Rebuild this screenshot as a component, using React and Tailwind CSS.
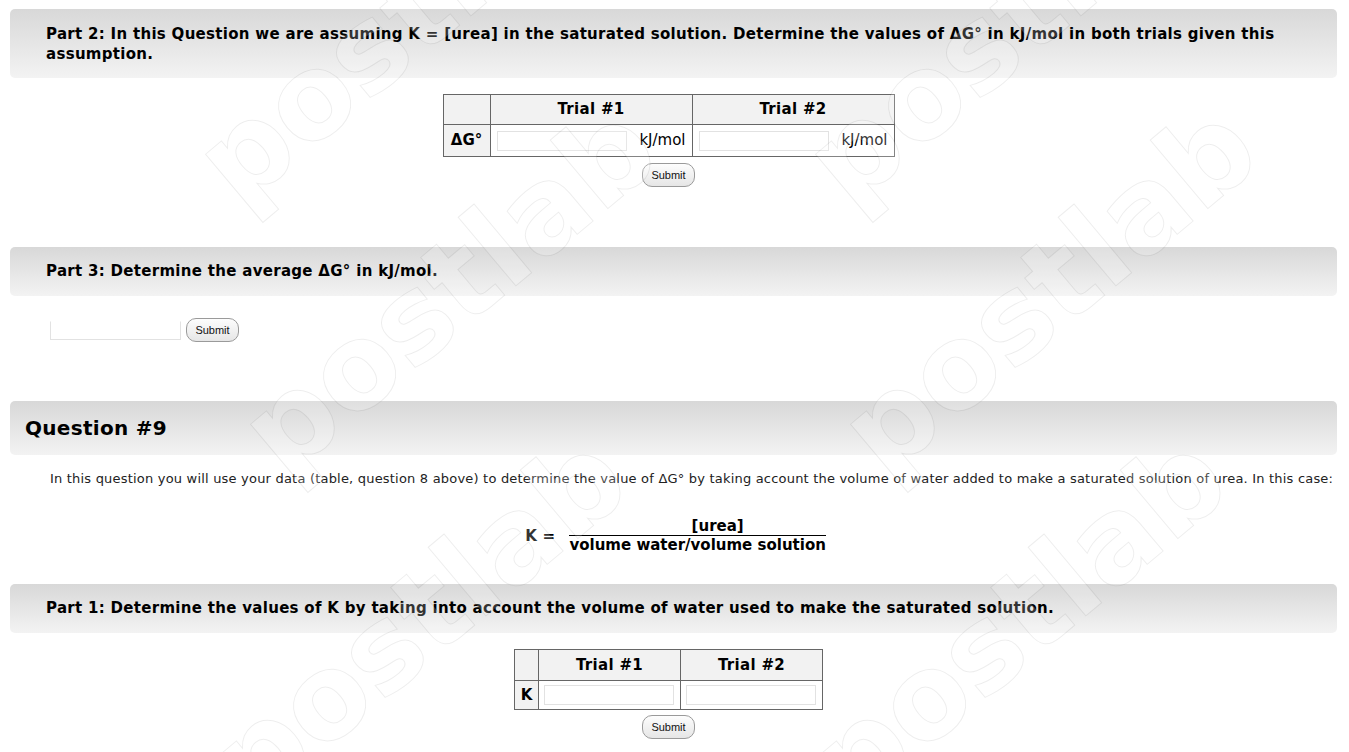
import React from 'react';

const font = "font-['Verdana','DejaVu_Sans',sans-serif]";

function Bar({ children, className = '' }) {
	return (
		<div className={`rounded-[5px] bg-linear-to-b from-[#d8d8d8] to-[#f3f3f3] ${className}`}>
			{children}
		</div>
	);
}

function SubmitBtn() {
	return (
		<button className="block h-[24px] w-[53px] rounded-[10px] border border-[#9a9a9a] bg-linear-to-b from-[#fdfdfd] to-[#e6e6e6] text-[11px] leading-none text-[#111] font-['Liberation_Sans',Arial,sans-serif]">
			Submit
		</button>
	);
}

function Field({ w = 'w-[130px]' }) {
	return <input type="text" className={`${w} h-[20px] border border-[#e2e2e2] bg-white outline-none`} />;
}

// faint "postlab" watermark tiled over the page
function Watermark({ className }) {
	return (
		<div
			className={`absolute text-[118px] font-bold leading-none text-white/20 [-webkit-text-stroke:1px_rgba(0,0,0,0.07)] -rotate-[40deg] select-none ${className}`}
		>
			postlab
		</div>
	);
}

export default function App() {
	return (
		<div className={`relative min-h-[752px] overflow-hidden bg-white text-black ${font}`}>
			<div className="ml-[10px] w-[1327px] pt-[9px]">
				{/* Part 2 */}
				<Bar className="h-[69px] px-[36px] pt-[15px]">
					<p className="text-[15px] font-bold leading-[20px] tracking-[0.3px]">
						Part 2: In this Question we are assuming K = [urea] in the saturated solution. Determine the values of ΔG° in kJ/mol in both trials given this assumption.
					</p>
				</Bar>

				<div className="mt-[16px] flex flex-col items-center pr-[10px]">
					<table className="border-collapse border border-[#666] text-[15px]">
						<thead>
							<tr className="h-[30px] bg-[#f2f2f2]">
								<th className="w-[47px] border border-[#666]"></th>
								<th className="w-[202px] border border-[#666] font-bold tracking-[0.3px]">Trial #1</th>
								<th className="w-[202px] border border-[#666] font-bold tracking-[0.3px]">Trial #2</th>
							</tr>
						</thead>
						<tbody>
							<tr className="h-[32px]">
								<td className="border border-[#666] bg-[#f2f2f2] px-[4px] text-center font-bold">ΔG°</td>
								<td className="border border-[#666] px-[6px]">
									<div className="flex items-center justify-between">
										<Field />
										<span>kJ/mol</span>
									</div>
								</td>
								<td className="border border-[#666] px-[6px]">
									<div className="flex items-center justify-between">
										<Field />
										<span>kJ/mol</span>
									</div>
								</td>
							</tr>
						</tbody>
					</table>
					<div className="mt-[6px]">
						<SubmitBtn />
					</div>
				</div>

				{/* Part 3 */}
				<Bar className="mt-[60px] flex h-[49px] items-center px-[36px]">
					<p className="text-[15px] font-bold tracking-[0.3px]">Part 3: Determine the average ΔG° in kJ/mol.</p>
				</Bar>
				<div className="mt-[22px] flex items-center gap-[5px] pl-[40px]">
					<input type="text" className="h-[19px] w-[131px] border border-[#e2e2e2] border-t-white outline-none" />
					<SubmitBtn />
				</div>

				{/* Question 9 */}
				<Bar className="mt-[59px] flex h-[54px] items-center px-[15px]">
					<h2 className="text-[20px] font-bold tracking-[0.3px]">Question #9</h2>
				</Bar>
				<p className="mt-[16px] pl-[40px] text-[13px] leading-[16px] tracking-[0.2px] whitespace-nowrap text-[#222]">
					In this question you will use your data (table, question 8 above) to determine the value of ΔG° by taking account the volume of water added to make a saturated solution of urea. In this case:
				</p>

				<div className="mt-[30px] flex items-center justify-center pl-[4px] text-[15px] font-bold">
					<span className="mr-[14px] tracking-[0.3px]">K =</span>
					<div className="flex flex-col items-center">
						<span className="block w-full border-b border-black pl-[40px] text-center leading-[18px]">[urea]</span>
						<span className="leading-[19px]">volume water/volume solution</span>
					</div>
				</div>

				{/* Part 1 */}
				<Bar className="mt-[29px] flex h-[49px] items-center px-[36px]">
					<p className="text-[15px] font-bold tracking-[0.3px]">Part 1: Determine the values of K by taking into account the volume of water used to make the saturated solution.</p>
				</Bar>

				<div className="mt-[16px] flex flex-col items-center pr-[10px]">
					<table className="border-collapse border border-[#666] text-[15px]">
						<thead>
							<tr className="h-[31px] bg-[#f2f2f2]">
								<th className="w-[24px] border border-[#666]"></th>
								<th className="w-[142px] border border-[#666] font-bold tracking-[0.3px]">Trial #1</th>
								<th className="w-[142px] border border-[#666] font-bold tracking-[0.3px]">Trial #2</th>
							</tr>
						</thead>
						<tbody>
							<tr className="h-[29px]">
								<td className="border border-[#666] bg-[#f2f2f2] px-[3px] text-center font-bold">K</td>
								<td className="border border-[#666] px-[5px]">
									<Field />
								</td>
								<td className="border border-[#666] px-[5px]">
									<Field />
								</td>
							</tr>
						</tbody>
					</table>
					<div className="mt-[5px]">
						<SubmitBtn />
					</div>
				</div>
			</div>

			{/* watermark */}
			<div className="pointer-events-none absolute inset-0 font-['DejaVu_Sans',sans-serif]">
				<Watermark className="left-[155px] top-[-40px]" />
				<Watermark className="left-[200px] top-[230px]" />
				<Watermark className="left-[170px] top-[560px]" />
				<Watermark className="left-[765px] top-[-40px]" />
				<Watermark className="left-[800px] top-[230px]" />
				<Watermark className="left-[770px] top-[560px]" />
			</div>
		</div>
	);
}
